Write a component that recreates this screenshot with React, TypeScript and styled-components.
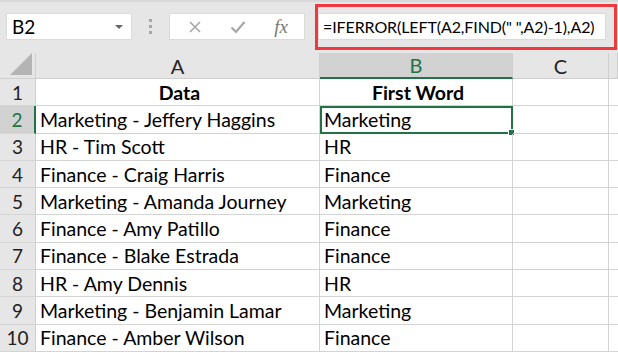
import styled, { createGlobalStyle } from "styled-components";

const GlobalStyle = createGlobalStyle`
  html, body {
    margin: 0;
    padding: 0;
    background: #ffffff;
  }
  body {
    font-family: Lato, "Open Sans", "Liberation Sans", sans-serif;
    color: #000;
  }
`;

const rows: [string, string][] = [
  ["Marketing - Jeffery Haggins", "Marketing"],
  ["HR - Tim Scott", "HR"],
  ["Finance - Craig Harris", "Finance"],
  ["Marketing - Amanda Journey", "Marketing"],
  ["Finance - Amy Patillo", "Finance"],
  ["Finance - Blake Estrada", "Finance"],
  ["HR - Amy Dennis", "HR"],
  ["Marketing - Benjamin Lamar", "Marketing"],
  ["Finance - Amber Wilson", "Finance"],
];

const columns = ["A", "B", "C"];
const selectedCol = "B";
const selectedRow = 2;

export default function App () {
  return (
    <Page>
      <GlobalStyle />
      <Toolbar>
        <NameBox>
          <span>B2</span>
          <Caret />
        </NameBox>
        <Grip>
          <i /><i /><i />
        </Grip>
        <FxBox>
          <svg width="14" height="14" viewBox="0 0 14 14">
            <path d="M2 2 L12 12 M12 2 L2 12" stroke="#a6a6a6" strokeWidth="1.6" fill="none" />
          </svg>
          <svg width="16" height="14" viewBox="0 0 16 14">
            <path d="M1.5 7.5 L6 12 L14.5 2" stroke="#a6a6a6" strokeWidth="2.2" fill="none" />
          </svg>
          <FxLabel>fx</FxLabel>
        </FxBox>
        <FormulaBox>
          =IFERROR(LEFT(A2,FIND(" ",A2)-1),A2)
        </FormulaBox>
        <Highlight />
      </Toolbar>

      <Sheet>
        <Corner>
          <svg width="22" height="22" viewBox="0 0 22 22">
            <polygon points="22,0 22,22 0,22" fill="#b4b4b4" />
          </svg>
        </Corner>
        {columns.map(c => (
          <ColHeader key={c} selected={c === selectedCol}>{c}</ColHeader>
        ))}
        <ColHeader selected={false} />

        <RowHeader selected={false}>1</RowHeader>
        <Cell bold center>Data</Cell>
        <Cell bold center>First Word</Cell>
        <Cell />
        <Cell edge />

        {rows.map(([data, word], i) => {
          const n = i + 2;
          return [
            <RowHeader key={`h${n}`} selected={n === selectedRow}>{n}</RowHeader>,
            <Cell key={`a${n}`}>{data}</Cell>,
            <Cell key={`b${n}`} active={n === selectedRow}>
              {word}
              {n === selectedRow && <Handle />}
            </Cell>,
            <Cell key={`c${n}`} />,
            <Cell key={`d${n}`} edge />,
          ];
        })}
      </Sheet>
    </Page>
  );
}

const Page = styled.div`
  width: 618px;
  height: 355px;
  overflow: hidden;
  background: #ffffff;
`;

const Toolbar = styled.div`
  position: relative;
  height: 53px;
  box-sizing: border-box;
  background: #e6e6e6;
  border-top: 2px solid #d9d9d9;
  display: flex;
  align-items: flex-start;
  padding: 11px 0 0 6px;
`;

const WhiteBox = styled.div`
  height: 27px;
  box-sizing: border-box;
  background: #ffffff;
  border: 1px solid #dadada;
  display: flex;
  align-items: center;
`;

const NameBox = styled(WhiteBox)`
  width: 126px;
  padding: 0 8px 0 5px;
  justify-content: space-between;
  font-size: 19px;
`;

const Caret = styled.span`
  width: 0;
  height: 0;
  border-left: 4px solid transparent;
  border-right: 4px solid transparent;
  border-top: 4px solid #666;
`;

const Grip = styled.div`
  width: 37px;
  display: flex;
  flex-direction: column;
  align-items: center;
  gap: 3px;
  padding-top: 6px;

  i {
    width: 3px;
    height: 3px;
    background: #a6a6a6;
  }
`;

const FxBox = styled(WhiteBox)`
  width: 136px;
  padding: 0 16px 0 18px;
  justify-content: space-between;
`;

const FxLabel = styled.span`
  font-family: "Liberation Serif", serif;
  font-style: italic;
  font-size: 19px;
  color: #777;
`;

const FormulaBox = styled(WhiteBox)`
  width: 288px;
  margin-left: 13px;
  padding-left: 4px;
  font-size: 16px;
  letter-spacing: -0.1px;
  white-space: nowrap;
  overflow: hidden;
`;

const Highlight = styled.div`
  position: absolute;
  left: 315px;
  top: 2px;
  width: 302px;
  height: 46px;
  box-sizing: border-box;
  border: 3px solid #f0393f;
  pointer-events: none;
`;

const Sheet = styled.div`
  display: grid;
  grid-template-columns: 36px 284px 193px 96px 1fr;
  grid-template-rows: 26px repeat(10, 27.3px);
  font-size: 19.5px;
`;

const Corner = styled.div`
  background: #e6e6e6;
  border-right: 1px solid #cfcfcf;
  border-bottom: 1px solid #cfcfcf;
  display: flex;
  align-items: flex-end;
  justify-content: flex-end;
  padding: 0 3px 3px 0;
`;

const ColHeader = styled.div<{ selected?: boolean }>`
  background: ${({ selected }) => (selected ? "#d2d2d2" : "#e6e6e6")};
  color: ${({ selected }) => (selected ? "#217346" : "#222")};
  border-right: 1px solid #cfcfcf;
  border-bottom: ${({ selected }) => (selected ? "2px solid #217346" : "1px solid #cfcfcf")};
  display: flex;
  align-items: center;
  justify-content: center;
  font-size: 20px;
`;

const RowHeader = styled.div<{ selected?: boolean }>`
  background: ${({ selected }) => (selected ? "#d2d2d2" : "#e6e6e6")};
  color: ${({ selected }) => (selected ? "#217346" : "#222")};
  border-right: ${({ selected }) => (selected ? "2px solid #217346" : "1px solid #cfcfcf")};
  border-bottom: 1px solid #d4d4d4;
  display: flex;
  align-items: center;
  justify-content: center;
  font-size: 19px;
`;

const Cell = styled.div<{ bold?: boolean; center?: boolean; active?: boolean; edge?: boolean }>`
  position: relative;
  box-sizing: border-box;
  border-right: ${({ edge }) => (edge ? "none" : "1px solid #d4d4d4")};
  border-bottom: 1px solid #d4d4d4;
  display: flex;
  align-items: center;
  justify-content: ${({ center }) => (center ? "center" : "flex-start")};
  padding-left: 4px;
  font-weight: ${({ bold }) => (bold ? 700 : 400)};
  white-space: nowrap;
  ${({ active }) => active && `
    outline: 2px solid #217346;
    outline-offset: -2px;
  `}
`;

const Handle = styled.span`
  position: absolute;
  right: -3px;
  bottom: -3px;
  width: 5px;
  height: 5px;
  background: #217346;
  border: 1px solid #fff;
`;
